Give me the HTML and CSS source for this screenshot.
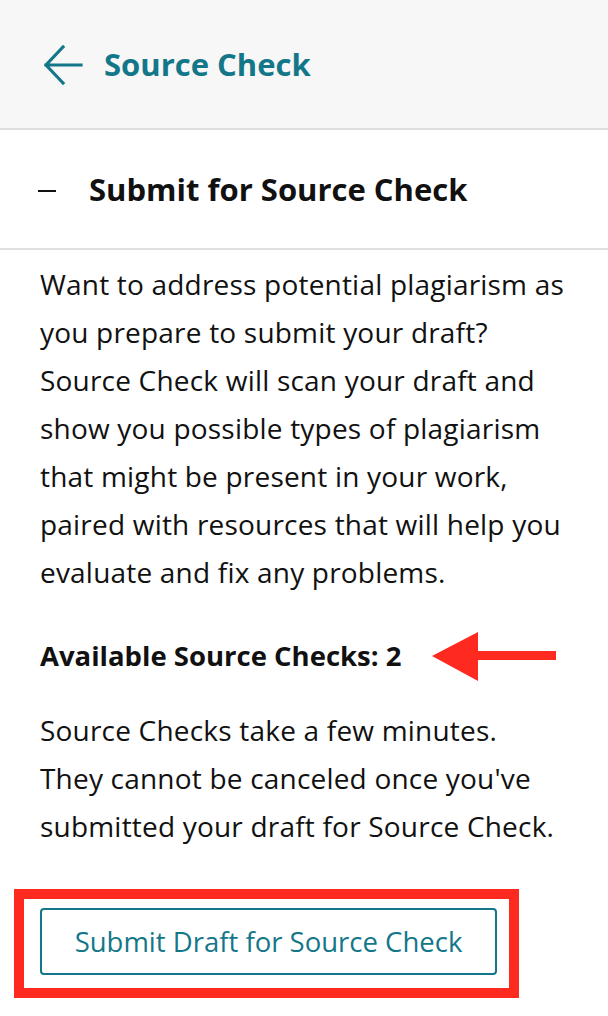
FILE: index.html
```html
<!DOCTYPE html>
<html lang="en">
<head>
<meta charset="utf-8">
<title>Source Check</title>
<link rel="stylesheet" href="styles.css">
</head>
<body>
<div class="panel">
  <header class="topbar">
    <svg class="back" viewBox="0 0 40 40" width="40" height="40" aria-hidden="true">
      <path d="M20 2 L3 20 L20 38 M3 20 L38 20" fill="none" stroke="#137789" stroke-width="3.2" stroke-linecap="square" stroke-linejoin="miter"/>
    </svg>
    <h1 class="topbar-title">Source Check</h1>
  </header>
  <div class="section-head">
    <span class="minus"></span>
    <h2 class="section-title">Submit for Source Check</h2>
  </div>
  <div class="content">
    <p class="text">Want to address potential plagiarism as you prepare to submit your draft? Source Check will scan your draft and show you possible types of plagiarism that might be present in your work, paired with resources that will help you evaluate and fix any problems.</p>
    <p class="available">Available Source Checks: 2</p>
    <p class="text note">Source Checks take a few minutes. They cannot be canceled once you've submitted your draft for Source Check.</p>
    <div class="btn-wrap">
      <button class="btn">Submit Draft for Source Check</button>
    </div>
  </div>
  <svg class="red-arrow" viewBox="0 0 126 50" width="126" height="50" aria-hidden="true">
    <polygon points="0,24 46,0 46,19 124,19 124,28 46,28 46,49" fill="#ff2a1f"/>
  </svg>
  <div class="red-box"></div>
  <div class="fade"></div>
</div>
</body>
</html>
```
FILE: styles.css
```css
html, body {
  margin: 0;
  padding: 0;
  background: #ffffff;
}
body {
  font-family: "Open Sans", "Noto Sans", sans-serif;
  color: #111111;
  width: 608px;
  height: 1016px;
  overflow: hidden;
}
.panel {
  position: relative;
  width: 608px;
  height: 1016px;
}
.topbar {
  height: 128px;
  background: #f7f7f7;
  border-bottom: 2px solid #dedede;
  display: flex;
  align-items: center;
  padding-left: 43px;
}
.back {
  display: block;
  margin-top: 2px;
}
.topbar-title {
  margin: 0 0 0 21px;
  font-size: 31px;
  font-weight: 700;
  color: #137789;
  letter-spacing: 0;
  line-height: 1;
}
.section-head {
  height: 118px;
  border-bottom: 2px solid #e0e0e0;
  display: flex;
  align-items: center;
  padding-left: 38px;
}
.minus {
  display: block;
  width: 18px;
  height: 2px;
  background: #111;
  margin-top: 4px;
}
.section-title {
  margin: 0 0 0 33px;
  font-size: 31px;
  font-weight: 700;
  line-height: 1;
  letter-spacing: 0;
  color: #111;
}
.content {
  padding: 10px 41.5px 0 40px;
}
.text {
  margin: 0;
  font-size: 28px;
  line-height: 48px;
  letter-spacing: 0.2px;
  color: #111;
}
.available {
  margin: 36px 0 0 0;
  font-size: 27.5px;
  line-height: 48px;
  font-weight: 700;
  letter-spacing: 0;
  color: #111;
}
.note {
  margin-top: 26px;
}
.btn-wrap {
  margin-top: 58px;
}
.btn {
  display: block;
  width: 457px;
  height: 67px;
  background: #ffffff;
  border: 2px solid #137789;
  border-radius: 4px;
  color: #137789;
  font-family: "Open Sans", "Noto Sans", sans-serif;
  font-size: 27.5px;
  letter-spacing: 0;
  padding: 0;
  cursor: pointer;
}
.red-arrow {
  position: absolute;
  left: 432px;
  top: 632px;
}
.red-box {
  position: absolute;
  left: 14px;
  top: 889px;
  width: 485px;
  height: 89px;
  border: 10px solid #ff2a1f;
}
.fade {
  position: absolute;
  left: 0;
  bottom: 0;
  width: 300px;
  height: 90px;
  background: radial-gradient(ellipse at 0% 100%, rgba(0,0,0,0.08), rgba(0,0,0,0) 70%);
  pointer-events: none;
  z-index: -1;
}
```
